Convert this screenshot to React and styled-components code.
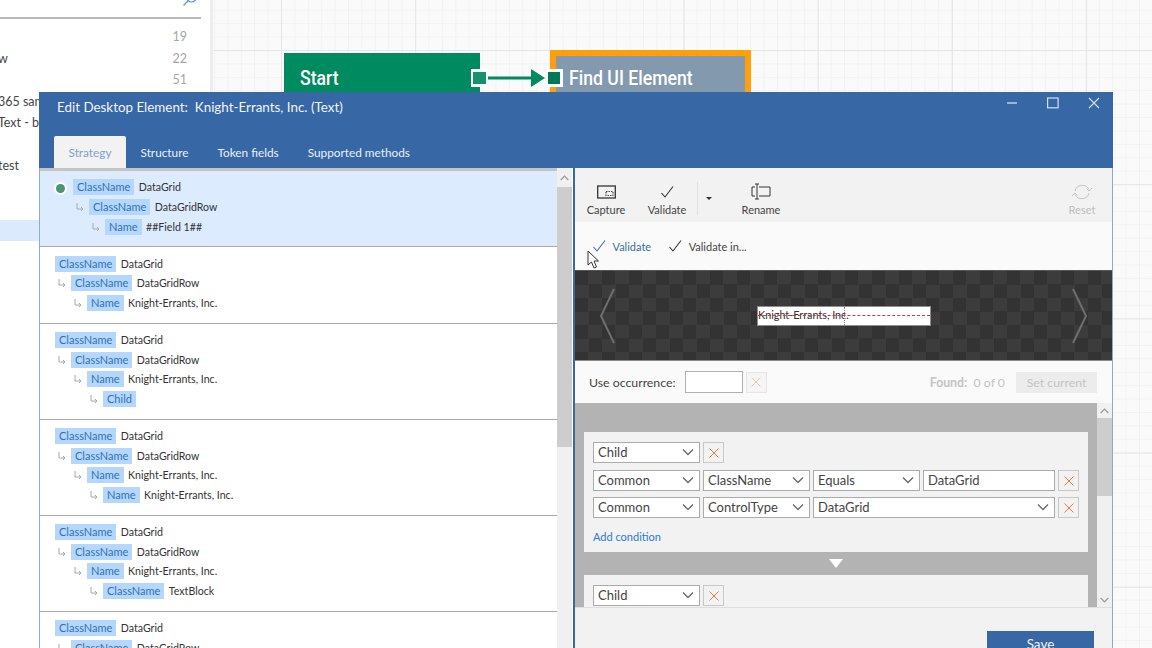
import React from "react";
import styled, { createGlobalStyle } from "styled-components";

const GlobalStyle = createGlobalStyle`
  html, body { margin: 0; padding: 0; background: #fafafa; }
  body { font-family: Lato, "Open Sans", sans-serif; }
  * { box-sizing: border-box; }
`;

const BLUE = "#3867a6";

const Desktop = styled.div`
  position: relative;
  width: 1152px;
  height: 648px;
  overflow: hidden;
  display: grid;
  grid-template-columns: 213px 1fr;
`;

/* left list behind the window */
const Sidebar = styled.div`
  background: #fff;
  border-right: 3px solid #ededed;
  padding-right: 9px;
  overflow: hidden;
`;
const SearchRow = styled.div`
  height: 19px;
  border-bottom: 2px solid #b9b9b9;
  display: flex;
  justify-content: flex-end;
  align-items: flex-end;
  padding: 0 3px 10px 0;
`;
const SideRows = styled.div`
  padding-top: 7px;
`;
const SideRow = styled.div`
  height: 21.5px;
  display: flex;
  justify-content: space-between;
  align-items: center;
  padding-right: 14px;
  font-size: 12.5px;
  color: #444;
  background: ${(p) => (p.$active ? "#dbeafc" : "transparent")};
  white-space: nowrap;
`;
const SideText = styled.span`
  margin-left: -2px;
`;
const SideCount = styled.span`
  color: #a6a6a6;
`;

const Canvas = styled.div`
  position: relative;
  background-color: #fafafa;
  background-image:
    linear-gradient(to right, #e6e6e6 1px, transparent 1px),
    linear-gradient(to bottom, #e6e6e6 1px, transparent 1px),
    linear-gradient(to right, #f2f2f2 1px, transparent 1px),
    linear-gradient(to bottom, #f2f2f2 1px, transparent 1px);
  background-size: 134.2px 134.2px, 134.2px 134.2px, 13.42px 13.42px, 13.42px 13.42px;
  background-position: 68px 50px, 68px 50px, 68px 50px, 68px 50px;
`;
const FlowNode = styled.div`
  position: absolute;
  top: ${(p) => p.$top}px;
  left: ${(p) => p.$left}px;
  width: ${(p) => p.$width}px;
  height: 60px;
  background: ${(p) => p.$bg};
  border: ${(p) => (p.$selected ? "6px solid #ff9f0a" : "none")};
  padding: ${(p) => (p.$selected ? "9px 0 0 13px" : "12px 0 0 16px")};
`;
const NodeLabel = styled.span`
  display: inline-block;
  color: #fff;
  font-family: Roboto, sans-serif;
  font-size: 21px;
  font-weight: 500;
  line-height: 27px;
  white-space: nowrap;
  transform: scaleX(0.84);
  transform-origin: left center;
`;
const Port = styled.div`
  position: absolute;
  top: 69px;
  left: ${(p) => p.$left}px;
  width: 16px;
  height: 18px;
  background: #fff;
  display: flex;
  align-items: center;
  justify-content: ${(p) => (p.$end ? "flex-start" : "flex-end")};
  padding: 0 1px;
  &::after {
    content: "";
    width: ${(p) => (p.$end ? 12 : 13)}px;
    height: 12px;
    background: ${(p) => (p.$end ? "#007a55" : "#16916e")};
  }
`;
const Connector = styled.svg`
  position: absolute;
  top: 68px;
  left: 275px;
`;

/* the dialog */
const Window = styled.div`
  position: absolute;
  top: 92px;
  left: 39px;
  width: 1074px;
  height: 600px;
  background: ${BLUE};
  display: flex;
  flex-direction: column;
`;
const TitleBar = styled.div`
  height: 30px;
  display: flex;
  align-items: center;
  justify-content: space-between;
  color: #f0f4fa;
  font-size: 13.4px;
  padding: 0 13px 0 18px;
`;
const TitleText = styled.div`
  white-space: pre;
`;
const WinControls = styled.div`
  display: flex;
  align-items: center;
  gap: 29px;
  margin-top: -8px;
  color: #cfe0f5;
`;
const TabBar = styled.div`
  height: 46px;
  display: flex;
  align-items: flex-end;
  padding-left: 15px;
`;
const Tab = styled.div`
  height: 32px;
  display: flex;
  align-items: center;
  padding: 1px 14.5px 0;
  font-size: 11.8px;
  border-radius: 2px 2px 0 0;
  background: ${(p) => (p.$active ? "#f2f2f2" : "transparent")};
  color: ${(p) => (p.$active ? "#7fa0cd" : "#eaf0f8")};
`;
const Body = styled.div`
  flex: 1;
  min-height: 0;
  display: grid;
  grid-template-columns: 535px 1fr;
  padding: 0 1px;
  background: #8eaad0;
`;

/* left: strategy list */
const ListPane = styled.div`
  display: flex;
  background: #fff;
  border-right: 2px solid ${BLUE};
  padding-right: 1px;
  min-height: 0;
  overflow: hidden;
`;
const StrategyList = styled.div`
  flex: 1;
  border-top: 3px solid #c4c4c4;
`;
const Strategy = styled.div`
  display: flex;
  padding: 6.5px 0 9.5px 15px;
  background: ${(p) => (p.$selected ? "#dcecfe" : "#fff")};
  border-bottom: 1px solid #a9a9a9;
`;
const Dot = styled.span`
  flex: none;
  width: 9px;
  height: 9px;
  margin: 6px 8px 0 1px;
  border-radius: 50%;
  background: #4a9470;
  box-shadow: 0 0 0 2px #fff;
`;
const TreeLine = styled.div`
  height: 19.75px;
  display: flex;
  align-items: center;
  padding-left: ${(p) => (p.$depth > 0 ? (p.$depth - 1) * 16 : 0)}px;
  font-size: 10.6px;
  color: #333;
  white-space: nowrap;
`;
const TreeArrow = styled.svg`
  flex: none;
  width: 16px;
  height: 12px;
`;
const Tag = styled.span`
  height: 16px;
  line-height: 15px;
  padding: 0 4px;
  background: #b5d7fd;
  color: #2e72b4;
  font-size: 11px;
  margin-right: 4.5px;
`;
const ScrollBar = styled.div`
  flex: none;
  width: ${(p) => p.$width}px;
  background: #f0f0f0;
  display: flex;
  flex-direction: column;
  align-items: center;
`;
const ScrollBtn = styled.div`
  height: ${(p) => p.$h}px;
  display: flex;
  align-items: center;
  justify-content: center;
`;
const ScrollThumb = styled.div`
  width: 100%;
  height: ${(p) => p.$h}px;
  background: #cdcdcd;
  flex: none;
`;

/* right: detail */
const DetailPane = styled.div`
  display: flex;
  flex-direction: column;
  background: #f2f2f2;
  min-height: 0;
`;
const Toolbar = styled.div`
  height: 54px;
  flex: none;
  display: flex;
  align-items: stretch;
  padding: 0 8px 0 9px;
`;
const ToolButton = styled.div`
  width: 44px;
  margin-left: ${(p) => p.$ml || 0}px;
  margin-right: ${(p) => p.$mr || 0}px;
  display: flex;
  flex-direction: column;
  align-items: center;
  padding-top: 15px;
  gap: 2px;
  font-size: 11px;
  color: ${(p) => (p.$disabled ? "#bdbdbd" : "#444")};
  svg { height: 18px; }
`;
const ToolSep = styled.div`
  width: 1px;
  height: 33px;
  margin-top: 14px;
  background: #e0e0e0;
`;
const Caret = styled.div`
  width: 0;
  height: 0;
  margin: 29px 0 0 8px;
  border-left: 3px solid transparent;
  border-right: 3px solid transparent;
  border-top: 3px solid #333;
`;
const ToolSpacer = styled.div`
  flex: 1;
`;
const SubBar = styled.div`
  height: 48px;
  flex: none;
  background: #fafafa;
  display: flex;
  align-items: center;
  padding-left: 17px;
  font-size: 11px;
`;
const SubItem = styled.div`
  display: flex;
  align-items: center;
  gap: 6.5px;
  margin-right: 17px;
  color: ${(p) => (p.$active ? "#3a6ea5" : "#444")};
`;
const Preview = styled.div`
  height: 91px;
  flex: none;
  position: relative;
  display: flex;
  align-items: center;
  justify-content: space-between;
  padding: 0 24px;
  border-top: 1px solid #555;
  border-bottom: 1px solid #8a8a8a;
  background-color: #333;
  background-image: conic-gradient(#3c3c3c 25%, transparent 25% 50%, #3c3c3c 50% 75%, transparent 75%);
  background-size: 27px 27px;
`;
const ElementBox = styled.div`
  position: absolute;
  left: 182px;
  top: 35px;
  width: 174px;
  height: 20px;
  background: #fff;
  border: 1px solid #8f8f8f;
  color: #333;
  font-size: 10.8px;
  line-height: 16px;
  white-space: nowrap;
  overflow: hidden;
  &::before {
    content: "";
    position: absolute;
    left: 0;
    right: 0;
    top: 8px;
    border-top: 1px dashed #c04040;
  }
  &::after {
    content: "";
    position: absolute;
    left: 86px;
    top: 0;
    bottom: 0;
    border-left: 1px dotted #d96a6a;
  }
`;
const OccurrenceBar = styled.div`
  height: 42px;
  flex: none;
  background: #fafafa;
  display: flex;
  align-items: center;
  padding: 0 15px 0 14px;
  font-size: 12.3px;
  color: #444;
`;
const OccurrenceInput = styled.div`
  width: 58px;
  height: 22px;
  margin-left: 9px;
  background: #fff;
  border: 1px solid #b0b0b0;
`;
const SquareButton = styled.div`
  flex: none;
  width: 21px;
  height: 21px;
  margin-left: ${(p) => p.$gap || 0}px;
  display: flex;
  align-items: center;
  justify-content: center;
  background: ${(p) => (p.$disabled ? "#f5f5f5" : "#f2f2f2")};
  border: 1px solid ${(p) => (p.$disabled ? "#e6e6e6" : "#c8c8c8")};
`;
const FoundLabel = styled.div`
  margin-left: auto;
  color: #c4c4c4;
  white-space: pre;
`;
const FoundBold = styled.span`
  font-weight: 700;
`;
const SetCurrent = styled.div`
  width: 81px;
  height: 21px;
  margin-left: 11px;
  background: #ececec;
  color: #c4c4c4;
  text-align: center;
  line-height: 21px;
`;
const Builder = styled.div`
  height: 204px;
  flex: none;
  display: flex;
  background: #b3b3b3;
  overflow: hidden;
`;
const BuilderScroll = styled.div`
  flex: 1;
  padding: 29px 9px 0 9px;
`;
const Card = styled.div`
  background: #f2f2f2;
  padding: 10px 9px 0;
  height: ${(p) => p.$h}px;
`;
const CondRow = styled.div`
  display: flex;
  gap: 3px;
  height: 21px;
  margin-bottom: ${(p) => p.$mb}px;
`;
const Field = styled.div`
  flex: none;
  width: ${(p) => p.$width}px;
  height: 21px;
  display: flex;
  align-items: center;
  justify-content: space-between;
  padding: 0 5px 1px 4px;
  background: #fff;
  border: 1px solid #ababab;
  font-size: 13px;
  color: #444;
`;
const AddLink = styled.div`
  margin-top: 12px;
  font-size: 11px;
  color: #2b7cd3;
`;
const Down = styled.div`
  height: 23px;
  display: flex;
  align-items: center;
  justify-content: center;
  &::after {
    content: "";
    border-left: 7.5px solid transparent;
    border-right: 7.5px solid transparent;
    border-top: 9px solid #fff;
  }
`;
const Footer = styled.div`
  flex: 1;
  display: flex;
  justify-content: flex-end;
  padding: 23px 18px 0 0;
  border-top: 1px solid #dedede;
`;
const SaveButton = styled.div`
  width: 107px;
  height: 34px;
  background: ${BLUE};
  color: #eef3f9;
  font-size: 13.5px;
  text-align: center;
  line-height: 26px;
`;
const Pointer = styled.svg`
  position: absolute;
  left: 587px;
  top: 250px;
`;

const Chevron = ({ color = "#666" }) => (
  <svg width="12" height="8" viewBox="0 0 12 8" fill="none" stroke={color} strokeWidth="1.3">
    <path d="M1 1.5 L6 6.5 L11 1.5" />
  </svg>
);
const Cross = ({ color = "#e07b4a", size = 10 }) => (
  <svg width={size} height={size} viewBox="0 0 10 10" fill="none" stroke={color} strokeWidth="1">
    <path d="M0.5 0.5 L9.5 9.5 M9.5 0.5 L0.5 9.5" />
  </svg>
);
const Check = ({ color = "#333", size = 14 }) => (
  <svg width={size} height={size} viewBox="0 0 14 14" fill="none" stroke={color} strokeWidth="1.1">
    <path d="M1.5 8 L5 12 L13 1.5" />
  </svg>
);
const ScrollChevron = ({ up }) => (
  <svg width="9" height="6" viewBox="0 0 9 6" fill="none" stroke="#9a9a9a" strokeWidth="1.2">
    <path d={up ? "M0.7 5 L4.5 1 L8.3 5" : "M0.7 1 L4.5 5 L8.3 1"} />
  </svg>
);

const strategies = [
  {
    selected: true,
    lines: [
      ["ClassName", "DataGrid"],
      ["ClassName", "DataGridRow"],
      ["Name", "##Field 1##"],
    ],
  },
  {
    lines: [
      ["ClassName", "DataGrid"],
      ["ClassName", "DataGridRow"],
      ["Name", "Knight-Errants, Inc."],
    ],
  },
  {
    lines: [
      ["ClassName", "DataGrid"],
      ["ClassName", "DataGridRow"],
      ["Name", "Knight-Errants, Inc."],
      ["Child", ""],
    ],
  },
  {
    lines: [
      ["ClassName", "DataGrid"],
      ["ClassName", "DataGridRow"],
      ["Name", "Knight-Errants, Inc."],
      ["Name", "Knight-Errants, Inc."],
    ],
  },
  {
    lines: [
      ["ClassName", "DataGrid"],
      ["ClassName", "DataGridRow"],
      ["Name", "Knight-Errants, Inc."],
      ["ClassName", "TextBlock"],
    ],
  },
  {
    lines: [
      ["ClassName", "DataGrid"],
      ["ClassName", "DataGridRow"],
    ],
  },
];

const sideRows = [
  { text: "", count: "19" },
  { text: "w", count: "22" },
  { text: "", count: "51" },
  { text: "365 samples" },
  { text: "Text - below" },
  { text: "" },
  { text: "test" },
  { text: "" },
  { text: "" },
  { text: "", active: true },
];

const Select = ({ width, children }) => (
  <Field $width={width}>
    {children}
    <Chevron />
  </Field>
);

const App = () => {
  return (
    <>
      <GlobalStyle />
      <Desktop>
        <Sidebar>
          <SearchRow>
            <svg width="16" height="16" viewBox="0 0 16 16" fill="none" stroke="#5b93d6" strokeWidth="1.2">
              <circle cx="9.5" cy="6" r="5" />
              <path d="M6 10 L1.5 14.5" />
            </svg>
          </SearchRow>
          <SideRows>
            {sideRows.map((row, i) => (
              <SideRow key={i} $active={row.active}>
                <SideText>{row.text}</SideText>
                <SideCount>{row.count}</SideCount>
              </SideRow>
            ))}
          </SideRows>
        </Sidebar>
        <Canvas>
          <FlowNode $top={53} $left={71} $width={196} $bg="#008a60"><NodeLabel>Start</NodeLabel></FlowNode>
          <FlowNode $top={50} $left={337} $width={201} $bg="#8299ae" $selected><NodeLabel>Find UI Element</NodeLabel></FlowNode>
          <Port $left={258} />
          <Connector width="60" height="20" viewBox="0 0 60 20">
            <path d="M0 10 H46" stroke="#008a60" strokeWidth="3" />
            <path d="M43 1 L57 10 L43 19 Z" fill="#008a60" />
          </Connector>
          <Port $left={334} $end />
        </Canvas>

        <Window>
          <TitleBar>
            <TitleText>Edit Desktop Element:  Knight-Errants, Inc. (Text)</TitleText>
            <WinControls>
              <svg width="12" height="12" viewBox="0 0 12 12" stroke="currentColor" strokeWidth="1.3"><path d="M1 6 H11" /></svg>
              <svg width="12" height="12" viewBox="0 0 12 12" fill="none" stroke="currentColor" strokeWidth="1.2"><rect x="0.6" y="1" width="10.5" height="9.8" /></svg>
              <svg width="12" height="12" viewBox="0 0 12 12" stroke="currentColor" strokeWidth="1.1"><path d="M1 1 L11 11 M11 1 L1 11" /></svg>
            </WinControls>
          </TitleBar>
          <TabBar>
            <Tab $active>Strategy</Tab>
            <Tab>Structure</Tab>
            <Tab>Token fields</Tab>
            <Tab>Supported methods</Tab>
          </TabBar>
          <Body>
            <ListPane>
              <StrategyList>
                {strategies.map((s, i) => (
                  <Strategy key={i} $selected={s.selected}>
                    {s.selected && <Dot />}
                    <div>
                      {s.lines.map(([tag, value], depth) => (
                        <TreeLine key={depth} $depth={depth}>
                          {depth > 0 && (
                            <TreeArrow viewBox="0 0 16 12" fill="none" stroke="#a8a8a8" strokeWidth="1">
                              <path d="M4 2 V8 H10 M8 6 L10 8 L8 10" />
                            </TreeArrow>
                          )}
                          <Tag>{tag}</Tag>
                          {value}
                        </TreeLine>
                      ))}
                    </div>
                  </Strategy>
                ))}
              </StrategyList>
              <ScrollBar $width={15}>
                <ScrollBtn $h={19}><ScrollChevron up /></ScrollBtn>
                <ScrollThumb $h={260} />
              </ScrollBar>
            </ListPane>

            <DetailPane>
              <Toolbar>
                <ToolButton $mr={17}>
                  <svg width="19" height="14" viewBox="0 0 19 14" fill="none">
                    <rect x="0.7" y="1" width="17.6" height="12" stroke="#333" strokeWidth="1.3" />
                    <path d="M9 6.5 H16 V10.5 H9 Z" stroke="#444" strokeWidth="1.2" strokeDasharray="1.5 1" />
                  </svg>
                  Capture
                </ToolButton>
                <ToolButton $mr={8}>
                  <Check size={14} />
                  Validate
                </ToolButton>
                <ToolSep />
                <Caret />
                <ToolButton $ml={27}>
                  <svg width="20" height="18" viewBox="0 0 20 18" fill="none" stroke="#333" strokeWidth="1">
                    <path d="M4 4 H1 V13 H4 M8 4 H19 V13 H8" />
                    <path d="M4 1 H8 M6 1 V16 M4 16 H8" />
                  </svg>
                  Rename
                </ToolButton>
                <ToolSpacer />
                <ToolButton $disabled>
                  <svg width="22" height="18" viewBox="0 0 22 18" fill="none" stroke="#c4c4c4" strokeWidth="1">
                    <path d="M4 8 A7.5 7.5 0 0 1 18 6.5 M21 5 L18.2 8 L15.5 5.5" />
                    <path d="M18 10 A7.5 7.5 0 0 1 4 11.5 M1 13 L3.8 10 L6.5 12.5" />
                  </svg>
                  Reset
                </ToolButton>
              </Toolbar>
              <SubBar>
                <SubItem $active>
                  <Check color="#3a6ea5" />
                  Validate
                </SubItem>
                <SubItem>
                  <Check />
                  Validate in...
                </SubItem>
              </SubBar>
              <Preview>
                <svg width="16" height="56" viewBox="0 0 16 56" fill="none" stroke="#6e6e6e" strokeWidth="2">
                  <path d="M15 1 L2 28 L15 55" />
                </svg>
                <ElementBox>Knight-Errants, Inc.</ElementBox>
                <svg width="16" height="56" viewBox="0 0 16 56" fill="none" stroke="#6e6e6e" strokeWidth="2">
                  <path d="M1 1 L14 28 L1 55" />
                </svg>
              </Preview>
              <OccurrenceBar>
                Use occurrence:
                <OccurrenceInput />
                <SquareButton $disabled $gap={3}><Cross color="#f0c9c0" /></SquareButton>
                <FoundLabel><FoundBold>Found:</FoundBold>  0 of 0</FoundLabel>
                <SetCurrent>Set current</SetCurrent>
              </OccurrenceBar>
              <Builder>
                <BuilderScroll>
                  <Card $h={120}>
                    <CondRow $mb={7}>
                      <Select width={107}>Child</Select>
                      <SquareButton><Cross /></SquareButton>
                    </CondRow>
                    <CondRow $mb={6}>
                      <Select width={107}>Common</Select>
                      <Select width={107}>ClassName</Select>
                      <Select width={107}>Equals</Select>
                      <Field $width={132}>DataGrid</Field>
                      <SquareButton><Cross /></SquareButton>
                    </CondRow>
                    <CondRow $mb={0}>
                      <Select width={107}>Common</Select>
                      <Select width={107}>ControlType</Select>
                      <Select width={242}>DataGrid</Select>
                      <SquareButton><Cross /></SquareButton>
                    </CondRow>
                    <AddLink>Add condition</AddLink>
                  </Card>
                  <Down />
                  <Card $h={60}>
                    <CondRow $mb={0}>
                      <Select width={107}>Child</Select>
                      <SquareButton><Cross /></SquareButton>
                    </CondRow>
                  </Card>
                </BuilderScroll>
                <ScrollBar $width={15}>
                  <ScrollBtn $h={15}><ScrollChevron up /></ScrollBtn>
                  <ScrollThumb $h={78} />
                  <ToolSpacer />
                  <ScrollBtn $h={15}><ScrollChevron /></ScrollBtn>
                </ScrollBar>
              </Builder>
              <Footer>
                <SaveButton>Save</SaveButton>
              </Footer>
            </DetailPane>
          </Body>
        </Window>

        <Pointer width="13" height="19" viewBox="0 0 13 19">
          <path d="M1 1 V15 L4.5 12 L7 18 L9.5 17 L7 11 H11.5 Z" fill="#fff" stroke="#333" strokeWidth="1" />
        </Pointer>
      </Desktop>
    </>
  );
};

export default App;
